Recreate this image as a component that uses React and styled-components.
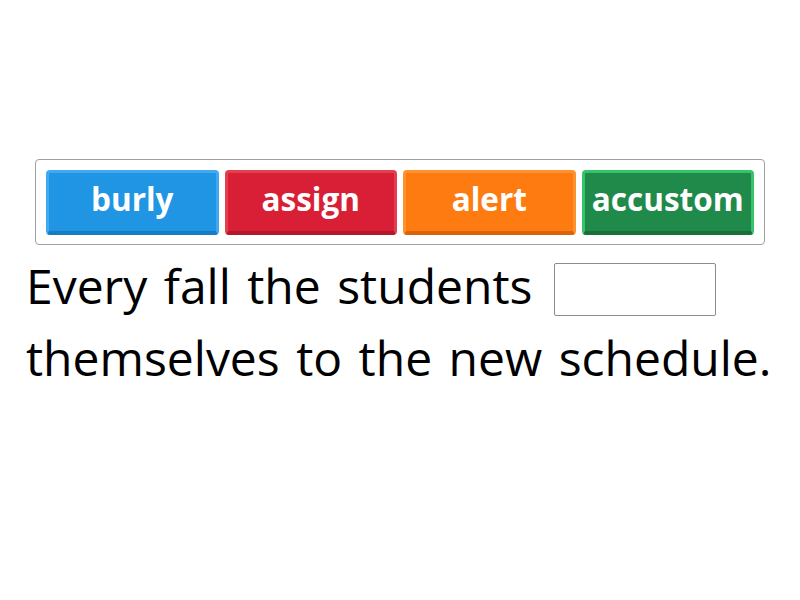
import styled, { createGlobalStyle } from "styled-components";

const GlobalStyle = createGlobalStyle`
    html, body {
        margin: 0;
        padding: 0;
        background: #ffffff;
    }
    body {
        font-family: "Open Sans", "DejaVu Sans", sans-serif;
    }
`;

const Page = styled.div`
    width: 800px;
    height: 600px;
    display: flex;
    flex-direction: column;
    align-items: center;
    padding-top: 159px;
    box-sizing: border-box;
`;

const WordBank = styled.div`
    width: 730px;
    height: 86px;
    box-sizing: border-box;
    border: 1px solid #a0a0a0;
    border-radius: 4px;
    display: flex;
    align-items: center;
    gap: 6px;
    padding: 0 10px;
`;

const Tile = styled.div`
    width: 173px;
    height: 65px;
    box-sizing: border-box;
    border-radius: 4px;
    background: ${(p) => p.$bg};
    border: 3px solid ${(p) => p.$light};
    border-bottom: 4px solid ${(p) => p.$dark};
    display: flex;
    align-items: center;
    justify-content: center;
    color: #ffffff;
    font-weight: 700;
    font-size: 31.5px;
    padding-bottom: 6px;
`;

const Sentence = styled.div`
    align-self: flex-start;
    width: 752px;
    margin-top: 5px;
    margin-left: 26px;
    font-size: 48px;
    line-height: 72px;
    color: #000000;
    word-spacing: 4px;
`;

const Blank = styled.span`
    display: inline-block;
    width: 162px;
    height: 53px;
    box-sizing: border-box;
    border: 1px solid #8c8c8c;
    border-radius: 2px;
    vertical-align: -12px;
    margin-left: 22px;
`;

const tiles = [
    { word: "burly", bg: "#2095e4", light: "#40aaf0", dark: "#167cc4" },
    { word: "assign", bg: "#d81f35", light: "#e2404f", dark: "#b3182a" },
    { word: "alert", bg: "#fe7b12", light: "#ff922f", dark: "#d9640a" },
    { word: "accustom", bg: "#208a4a", light: "#36c46b", dark: "#196e3a" },
];

const App = () => {
    return (
        <Page>
            <GlobalStyle />
            <WordBank>
                {tiles.map((t) => (
                    <Tile key={t.word} $bg={t.bg} $light={t.light} $dark={t.dark}>
                        {t.word}
                    </Tile>
                ))}
            </WordBank>
            <Sentence>
                Every fall the students<Blank /> themselves to the new schedule.
            </Sentence>
        </Page>
    );
};

export default App;
